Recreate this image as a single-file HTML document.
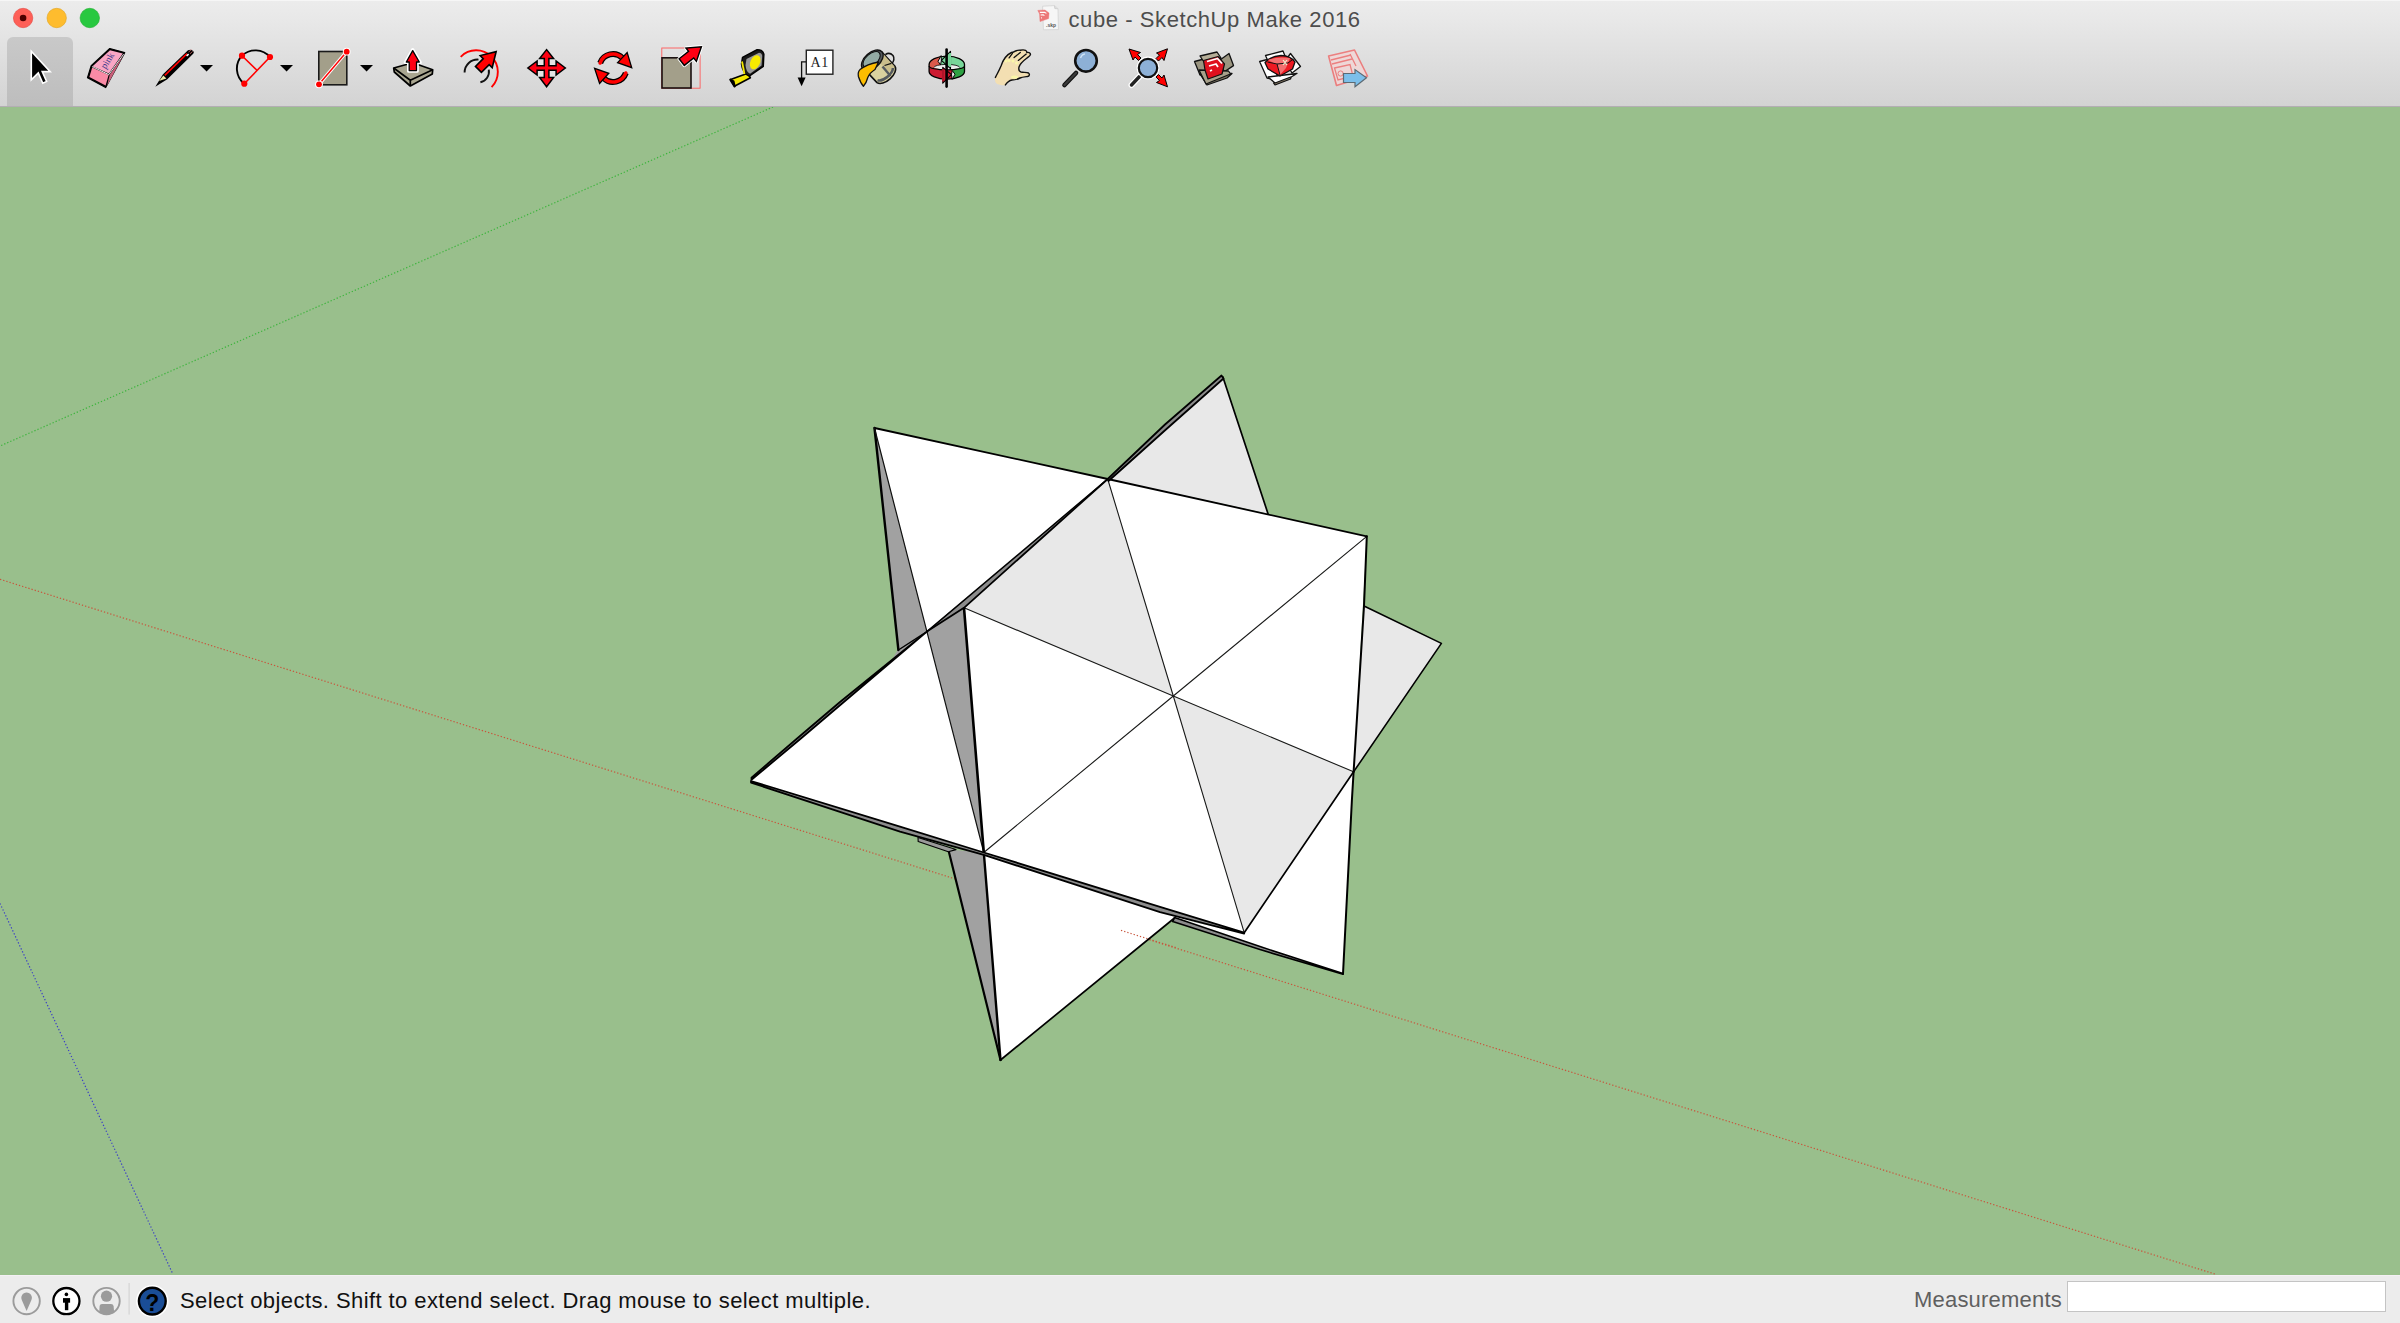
<!DOCTYPE html>
<html><head><meta charset="utf-8">
<style>
html,body{margin:0;padding:0;width:2400px;height:1323px;overflow:hidden;font-family:"Liberation Sans",sans-serif;}
#top{position:absolute;left:0;top:0;width:2400px;height:106px;background:linear-gradient(#ececec 0px,#e8e8e8 20px,#d3d3d3 106px);}
#topline{position:absolute;left:0;top:0;width:2400px;height:1px;background:#f6f6f6;}
#tbb{position:absolute;left:0;top:106px;width:2400px;height:1px;background:#b3aeb3;}
#view{position:absolute;left:0;top:107px;width:2400px;height:1168px;background:#99bf8c;overflow:hidden;}
#status{position:absolute;left:0;top:1275px;width:2400px;height:48px;background:#ececec;}
.title{position:absolute;left:1068.5px;top:6.5px;font-size:22px;color:#4d4d4d;white-space:nowrap;letter-spacing:0.58px;}
.stxt{position:absolute;left:180px;top:1288px;font-size:22px;color:#111;white-space:nowrap;letter-spacing:0.42px;}
.meas{position:absolute;left:1914px;top:1287px;font-size:22px;color:#5f5f5f;white-space:nowrap;letter-spacing:0.2px;}
.mbox{position:absolute;left:2067px;top:1281px;width:317px;height:29px;background:#fff;border:1px solid #c4c4c4;}
.sel{position:absolute;left:7px;top:37px;width:66px;height:69px;background:linear-gradient(#c9c9c9,#bdbdbd);border-radius:6px 6px 0 0;}
svg{position:absolute;overflow:visible;}
</style></head><body>
<div id="top"></div><div id="topline"></div><div id="tbb"></div>
<div class="sel"></div>
<div class="title">cube - SketchUp Make 2016</div>
<div id="view"></div>
<div id="status"></div><div style="position:absolute;left:0;top:1275px;width:2400px;height:1px;background:#f4f0f4"></div>
<div class="stxt">Select objects. Shift to extend select. Drag mouse to select multiple.</div>
<div class="meas">Measurements</div>
<div class="mbox"></div>
<!--TRAFFIC--><!--DOC--><svg style="left:1030px;top:0" width="40" height="40" viewBox="1030 0 40 40">
<path d="M1042.6,6.2 L1054.8,5.6 L1058,8.8 L1058.4,29.6 L1043.4,29.8 Z" fill="#f6f6f6" stroke="#cfcfcf" stroke-width="0.7"/>
<path d="M1054.4,5.8 L1054.8,8.6 L1057.8,8.8" fill="#ddd" stroke="#bbb" stroke-width="0.5"/>
<text x="1046" y="26.6" font-family="Liberation Sans" font-weight="bold" font-size="5" fill="#555">.skp</text>
<path d="M1037.8,10.4 L1045,10 L1049,13 L1048.6,18.6 L1040,21.6 L1039.6,14 Z" fill="#ec7878" stroke="#e66" stroke-width="0.4"/>
<path d="M1039.8,12.4 L1044.6,12.2 L1046.4,13.4 M1040.6,15 L1043.2,14.8 L1044.4,15.6 M1041,18 L1042,17.8" fill="none" stroke="#fff" stroke-width="1.1"/>
</svg>
<!--/DOC-->
<!--ICONS--><svg style="left:0;top:0" width="1400" height="107" viewBox="0 0 1400 107">
<!-- select arrow -->
<path d="M31.3,51.2 L31.3,79.8 L38.3,72.9 L42.8,83.2 L46.6,81.4 L42.2,71.6 L50.2,71.6 Z" fill="#000" stroke="#fff" stroke-width="1.6" stroke-linejoin="miter"/>
<!-- eraser -->
<g stroke-linejoin="round">
<path d="M91.2,65.8 L109.8,48.5 L124.7,52.6 L105.7,87.5 L87.5,77.6 Z" fill="#000" stroke="#000" stroke-width="1.2"/>
<path d="M92.6,66.2 L110,50.2 L122.8,53.6 L108.8,73.6 Z" fill="#f9a6c4"/>
<path d="M92.2,67.4 L108.6,75.0 L105.6,85.6 L89.4,77.0 Z" fill="#f98aa5"/>
<path d="M109.8,74.6 L123.6,55 L107,86 Z" fill="#c9607a"/>
<path d="M92.2,66.6 L108.8,74.6 L123.6,54.2" fill="none" stroke="#fff" stroke-width="0.9"/>
<text x="0" y="0" font-family="Liberation Serif" font-size="9.5" fill="#3a3a8a" transform="translate(105.5,69.5) rotate(-58)">pink</text>
</g>
<!-- pencil -->
<g stroke-linejoin="round">
<path d="M155.3,86.7 L163,74.3 L188,50.3 Q191.5,48.8 193.6,51.6 Q194.4,53.2 192.7,54.3 L167.3,79.3 Z" fill="#000"/>
<path d="M164.8,75.4 L187,53.6" stroke="#ff0000" stroke-width="1.6"/>
<path d="M159,81 L163.4,75.4 L166.4,78.6 Z" fill="#ece8a6"/>
<path d="M186.6,56 L188.6,54.2" stroke="#fff" stroke-width="1.6"/>
<path d="M188.6,52 L191.4,49.6 M190,53.8 L192.6,51.4" stroke="#d46a6a" stroke-width="0.8"/>
</g>
<path d="M200,65 L213,65 L206.6,71.4 Z" fill="#000"/>
<!-- arc -->
<path d="M244.3,83.7 A19,19 0 0 1 242,55.7 M242,55.7 A19.5,19.5 0 0 1 270,57" fill="none" stroke="#000" stroke-width="1.9"/>
<path d="M244.3,83.7 L270,57 M242,55.7 L256.7,70" stroke="#ff0000" stroke-width="1.6" fill="none"/>
<circle cx="242" cy="55.7" r="3.1" fill="#ff0000"/>
<circle cx="270" cy="57" r="3.1" fill="#ff0000"/>
<circle cx="244.3" cy="83.7" r="3.1" fill="#ff0000"/>
<path d="M280,65 L293,65 L286.6,71.4 Z" fill="#000"/>
<!-- rectangle -->
<rect x="318.8" y="51.5" width="28" height="33.3" fill="#a39f8a" stroke="#1a1a1a" stroke-width="1.6"/>
<path d="M319,84.3 L346.7,51.7" stroke="#fff" stroke-width="3.4"/>
<path d="M319,84.3 L346.7,51.7" stroke="#ff0000" stroke-width="1.4"/>
<circle cx="346.7" cy="51.7" r="3.9" fill="#fff"/><circle cx="346.7" cy="51.7" r="2.9" fill="#ff0000"/>
<circle cx="319" cy="84.3" r="3.9" fill="#fff"/><circle cx="319" cy="84.3" r="2.9" fill="#ff0000"/>
<path d="M360,65 L373,65 L366.6,71.4 Z" fill="#000"/>
<!-- push pull -->
<g stroke="#000" stroke-width="1.7" stroke-linejoin="round">
<path d="M393.7,68 L412.7,62.7 L432.7,69.7 L432.3,74 L410.3,86 L394.3,72 Z" fill="#a9a690"/>
<path d="M393.7,68 L410.3,80.3 L432.7,69.7 M410.3,80.3 L410.3,86" fill="none"/>
<path d="M412.7,49.6 L420.3,62.5 L417.2,62.5 L417.2,71.2 L408.6,71.2 L408.6,62.5 L405.3,62.5 Z" fill="#fff" stroke="#fff" stroke-width="3.2"/><path d="M412.7,50.6 L419.3,62 L416.5,62 L416.5,70.6 L409.2,70.6 L409.2,62 L406.3,62 Z" fill="#ff0013" stroke="#000" stroke-width="1.3"/>
</g>
</svg>
<!--/ICONS-->
<!--SCENE--><svg style="left:0;top:0" width="2400" height="1275" viewBox="0 0 2400 1275"><defs><clipPath id="vc"><rect x="0" y="107" width="2400" height="1168"/></clipPath></defs><g clip-path="url(#vc)">
<line x1="773" y1="107" x2="0" y2="446" stroke="#3db43d" stroke-width="1.2" stroke-dasharray="1.3,2.0"/>
<line x1="0" y1="579.3" x2="2216" y2="1274.4" stroke="#c8553c" stroke-width="1.2" stroke-dasharray="1.3,2.0"/>
<line x1="0" y1="903.4" x2="173" y2="1274.3" stroke="#3b3fc6" stroke-width="1.2" stroke-dasharray="1.3,2.0"/>
<polygon points="1222.8,376.8 1268.0,513.7 1107.7,479.0" fill="#e8e8e8"/>
<polygon points="1364.0,606.0 1441.4,643.4 1353.6,771.8" fill="#e8e8e8"/>
<polygon points="1353.6,771.8 1351.9,800.0 1343.0,974.0 1174.5,918.0 1244.2,932.7" fill="#ffffff"/>
<polygon points="983.8,852.5 1000.5,1060.0 1174.5,918.0 1244.2,932.7" fill="#ffffff"/>
<polygon points="948.3,849.5 1000.5,1060.0 983.8,852.5" fill="#a1a1a1"/>
<polygon points="1173.3,696.0 964.0,607.8 1107.7,479.0" fill="#e8e8e8"/>
<polygon points="1173.3,696.0 1107.7,479.0 1366.8,536.3" fill="#ffffff"/>
<polygon points="1173.3,696.0 1366.8,536.3 1353.6,771.8" fill="#ffffff"/>
<polygon points="1173.3,696.0 1353.6,771.8 1244.2,932.7" fill="#e8e8e8"/>
<polygon points="1173.3,696.0 1244.2,932.7 983.8,852.5" fill="#ffffff"/>
<polygon points="1173.3,696.0 983.8,852.5 964.0,607.8" fill="#ffffff"/>
<polygon points="874.5,428.0 1107.7,479.0 1104.0,482.0 926.9,631.6" fill="#ffffff"/>
<polygon points="874.5,428.0 926.9,631.6 899.0,652.0" fill="#a1a1a1"/>
<polygon points="897.0,651.0 926.9,631.6 892.0,660.0" fill="#a1a1a1"/>
<polygon points="926.9,631.6 964.0,607.8 983.8,852.5" fill="#a1a1a1"/>
<polygon points="750.7,781.5 752.0,778.0 926.9,631.6 983.8,852.5" fill="#ffffff"/>
<line x1="1121" y1="930.4" x2="1176" y2="947.6" stroke="#c8553c" stroke-width="1.2" stroke-dasharray="1.3,2.0"/>
<polyline points="1173.3,696.0 1107.7,479.0" fill="none" stroke="#1a1a1a" stroke-width="1.1" stroke-linejoin="round" stroke-linecap="round"/>
<polyline points="1173.3,696.0 1366.8,536.3" fill="none" stroke="#1a1a1a" stroke-width="1.1" stroke-linejoin="round" stroke-linecap="round"/>
<polyline points="1173.3,696.0 1353.6,771.8" fill="none" stroke="#1a1a1a" stroke-width="1.1" stroke-linejoin="round" stroke-linecap="round"/>
<polyline points="1173.3,696.0 1244.2,932.7" fill="none" stroke="#1a1a1a" stroke-width="1.1" stroke-linejoin="round" stroke-linecap="round"/>
<polyline points="1173.3,696.0 983.8,852.5" fill="none" stroke="#1a1a1a" stroke-width="1.1" stroke-linejoin="round" stroke-linecap="round"/>
<polyline points="1173.3,696.0 964.0,607.8" fill="none" stroke="#1a1a1a" stroke-width="1.1" stroke-linejoin="round" stroke-linecap="round"/>
<polyline points="874.5,428.0 1107.7,479.0 1366.8,536.3" fill="none" stroke="#000" stroke-width="1.8" stroke-linejoin="round" stroke-linecap="round"/>
<polyline points="1222.8,376.8 1268.0,513.7" fill="none" stroke="#000" stroke-width="1.7" stroke-linejoin="round" stroke-linecap="round"/>
<polyline points="1366.8,536.3 1364.0,606.0 1353.6,771.8" fill="none" stroke="#000" stroke-width="2.0" stroke-linejoin="round" stroke-linecap="round"/>
<polyline points="1364.0,606.0 1441.4,643.4 1353.6,771.8" fill="none" stroke="#000" stroke-width="1.6" stroke-linejoin="round" stroke-linecap="round"/>
<polyline points="1353.6,771.8 1351.9,800.0 1343.0,974.0" fill="none" stroke="#000" stroke-width="2.0" stroke-linejoin="round" stroke-linecap="round"/>
<polyline points="874.5,428.0 898.4,650.0" fill="none" stroke="#000" stroke-width="2.4" stroke-linejoin="round" stroke-linecap="round"/>
<polyline points="874.5,428.0 983.8,852.5" fill="none" stroke="#111" stroke-width="1.2" stroke-linejoin="round" stroke-linecap="round"/>
<polyline points="964.0,607.8 983.8,852.5" fill="none" stroke="#000" stroke-width="2.6" stroke-linejoin="round" stroke-linecap="round"/>
<polyline points="948.3,849.5 1000.5,1060.0" fill="none" stroke="#000" stroke-width="2.2" stroke-linejoin="round" stroke-linecap="round"/>
<polyline points="983.8,852.5 1000.5,1060.0" fill="none" stroke="#000" stroke-width="2.4" stroke-linejoin="round" stroke-linecap="round"/>
<polyline points="1000.5,1060.0 1174.5,918.0" fill="none" stroke="#000" stroke-width="1.7" stroke-linejoin="round" stroke-linecap="round"/>
<polyline points="1244.2,932.7 1353.6,771.8" fill="none" stroke="#000" stroke-width="1.7" stroke-linejoin="round" stroke-linecap="round"/>
<polyline points="898.4,650.0 926.9,631.6" fill="none" stroke="#000" stroke-width="1.4" stroke-linejoin="round" stroke-linecap="round"/>
<polygon points="926.9,631.6 945.0,615.7 985.0,582.7 1107.7,479.0 985.0,589.2 964.0,607.8" fill="#8c8c8c"/>
<polyline points="926.9,631.6 1107.7,479.0" fill="none" stroke="#000" stroke-width="1.5" stroke-linejoin="round" stroke-linecap="round"/>
<polyline points="926.9,631.6 964.0,607.8 1107.7,479.0" fill="none" stroke="#000" stroke-width="1.8" stroke-linejoin="round" stroke-linecap="round"/>
<polygon points="751.5,777.6 800.0,736.0 840.0,702.0 926.9,631.6 926.9,631.6 840.0,705.2 800.0,739.2 751.5,779.8" fill="#8c8c8c" stroke="#000" stroke-width="1.8" stroke-linejoin="round"/>
<polygon points="1107.7,479.0 1165.0,424.5 1221.5,375.5 1223.5,378.5 1166.5,429.0 1108.5,481.0" fill="#8c8c8c" stroke="#000" stroke-width="1.8" stroke-linejoin="round"/>
<polygon points="751.0,781.0 900.0,826.6 983.8,852.5 1160.0,906.9 1244.2,932.7 1244.2,933.6 1160.0,912.2 983.8,854.8 900.0,831.6 751.0,782.6" fill="#8c8c8c" stroke="#000" stroke-width="1.8" stroke-linejoin="round"/>
<polygon points="1174.5,917.6 1260.0,946.6 1343.0,973.6 1343.0,974.2 1260.0,949.6 1172.7,921.6" fill="#8c8c8c" stroke="#000" stroke-width="1.6" stroke-linejoin="round"/>
<polygon points="918,837.4 956,849.6 948.3,851.8 918.2,841.6" fill="#9a9a9a" stroke="#000" stroke-width="1.1" stroke-linejoin="round"/>
</g></svg><!--/SCENE-->
<!--ICONS2--><svg style="left:0;top:0" width="1400" height="107" viewBox="0 0 1400 107">
<!-- offset -->
<path d="M460.7,56.8 A20.3,20.3 0 1 1 491.6,87.2" fill="none" stroke="#ff0000" stroke-width="1.9"/>
<path d="M464.6,72.5 A13,13 0 0 1 478.5,59.6" fill="none" stroke="#111" stroke-width="1.9"/>
<path d="M480.4,82.3 A11,11 0 0 0 488.8,69.7" fill="none" stroke="#111" stroke-width="1.9"/>
<path d="M0,0 L-14,-8.5 L-14,-4.2 L-25,-4.2 L-25,4.2 L-14,4.2 L-14,8.5 Z" transform="translate(496.1,51.7) rotate(135) scale(-1,1)" fill="#ff0000" stroke="#000" stroke-width="1.6" stroke-linejoin="miter"/>
<!-- move -->
<g transform="translate(546.6,68)">
<rect x="-9.5" y="-9.5" width="19" height="19" fill="#e4e4e4"/>
<path d="M0,-18.4 L7,-9.5 L2.3,-9.5 L2.3,-2.3 L9.5,-2.3 L9.5,-7 L18.7,0 L9.5,7 L9.5,2.3 L2.3,2.3 L2.3,9.5 L7,9.5 L0,18.7 L-7,9.5 L-2.3,9.5 L-2.3,2.3 L-9.5,2.3 L-9.5,7 L-18.7,0 L-9.5,-7 L-9.5,-2.3 L-2.3,-2.3 L-2.3,-9.5 L-7,-9.5 Z" fill="#ff0013" stroke="#000" stroke-width="1.5" stroke-linejoin="miter"/>
</g>
<!-- rotate -->
<g stroke-linejoin="miter">
<path d="M600.2,63 A13.5,13.5 0 0 1 622.5,58" fill="none" stroke="#000" stroke-width="6"/>
<path d="M600.2,63 A13.5,13.5 0 0 1 622.5,58" fill="none" stroke="#ff0000" stroke-width="3.6" stroke-linecap="round"/>
<path d="M627.2,52.6 L631.7,67.6 L617.6,62.6 Z" fill="#ff0000" stroke="#000" stroke-width="1.3"/>
<path d="M625.8,73 A13.5,13.5 0 0 1 603.5,78" fill="none" stroke="#000" stroke-width="6"/>
<path d="M625.8,73 A13.5,13.5 0 0 1 603.5,78" fill="none" stroke="#ff0000" stroke-width="3.6" stroke-linecap="round"/>
<path d="M594.6,68.4 L599.6,83.4 L608.8,73.3 Z" fill="#ff0000" stroke="#000" stroke-width="1.3"/>
</g>
<!-- scale -->
<rect x="661.8" y="48" width="38.3" height="40.2" fill="none" stroke="#ff5a5a" stroke-width="0.9"/>
<rect x="662" y="57.8" width="29" height="30.2" fill="#a39f8a" stroke="#1a1010" stroke-width="1.6"/>
<path d="M0,0 L-13,-8.5 L-13,-4.2 L-25,-4.2 L-25,4.2 L-13,4.2 L-13,8.5 Z" transform="translate(701.4,46.7) rotate(142)  scale(-1,1)" fill="#fff" stroke="#fff" stroke-width="3.4" stroke-linejoin="round"/>
<path d="M0,0 L-13,-8.5 L-13,-4.2 L-25,-4.2 L-25,4.2 L-13,4.2 L-13,8.5 Z" transform="translate(701.4,46.7) rotate(142)  scale(-1,1)" fill="#ff0013" stroke="#000" stroke-width="1.4"/>
<!-- tape -->
<g stroke-linejoin="round">
<path d="M730.6,79.5 L747.8,73.2 L750.4,77.8 L734.4,86.2 Z" fill="#f4e800" stroke="#000" stroke-width="1.6"/>
<path d="M730.4,79.6 L734.6,86.4 L733.5,81.5 Z" fill="#000" stroke="#000" stroke-width="2.2"/>
<path d="M742.5,57.4 L757.1,49.6 Q762.8,49.5 763.9,54.2 L763.3,66.4 L749.2,76.2 Q742.4,73 741.4,64 Z" fill="#1a1a1a" stroke="#000" stroke-width="1.4"/>
<path d="M746.5,59 L759,52.8 Q762,53.2 762.2,56 L761.5,65.5 L750,73.8 Q746,72 745.5,65 Z" fill="#9a9a9a"/>
<ellipse cx="755.2" cy="62.2" rx="4.8" ry="7.4" transform="rotate(25 755.2 62.2)" fill="#f8ec00"/>
<path d="M742,61.5 L744.5,74" stroke="#f4e800" stroke-width="1.8"/>
</g>
<!-- text -->
<rect x="806.3" y="50.2" width="26.6" height="24" fill="#fff" stroke="#222" stroke-width="1.4"/>
<text x="810.6" y="66.6" font-family="Liberation Serif" font-size="14" fill="#222" letter-spacing="0.6">A1</text>
<path d="M806,61.9 L801.6,61.9 L801.6,79" fill="none" stroke="#111" stroke-width="1.3"/>
<path d="M797.6,77.5 L805.6,77.5 L801.6,86.2 Z" fill="#000"/>
<!-- paint bucket -->
<g transform="translate(853,45)" stroke-linejoin="round">
<path d="M32.3,9.6 Q36.5,6.8 40,10.5 Q42.5,14.5 38.2,19.8" fill="none" stroke="#111" stroke-width="1.5"/>
<path d="M28.6,6.9 L42,21.4 A12.2,6.8 -41.3 0 1 24,37.6 L10.4,23.1 Z" fill="#d9d19f" stroke="#111" stroke-width="1.6"/>
<path d="M29,7.5 L41.5,21.5 L36,27 L26,17 Z" fill="#c9bd8b"/>
<path d="M40,23 A10.8,5.8 -41.3 0 1 24.5,35.2" fill="none" stroke="#555a5f" stroke-width="2.6"/>
<path d="M29.5,21.5 L37.5,31" stroke="#555a5f" stroke-width="2.4"/>
<path d="M31.5,20.5 L38.4,18.4" stroke="#111" stroke-width="1.2"/>
<ellipse cx="19.3" cy="15.2" rx="12.8" ry="7.6" transform="rotate(-41.3 19.3 15.2)" fill="#555a5f" stroke="#111" stroke-width="1.3"/>
<ellipse cx="18.6" cy="14.6" rx="10.3" ry="5.7" transform="rotate(-41.3 18.6 14.6)" fill="#93aba4" stroke="#111" stroke-width="1"/>
<path d="M25.6,17 Q14,19 7,24.6 Q4.5,27 5.4,31.5 Q7.5,38 10.4,41.2 Q13.4,38 14.8,32.5 Q16.5,28 22,24.5 Z" fill="#fdbd00" stroke="#111" stroke-width="1.3"/>
</g>
<!-- orbit -->
<defs><clipPath id="obR1"><rect x="18.1" y="-5" width="30" height="60"/></clipPath><clipPath id="obR2"><rect x="29.2" y="-5" width="30" height="60"/></clipPath></defs>
<g transform="translate(923,45)" stroke-linejoin="round">
<path id="obBack" d="M6.1,19.5 A17.7,8.4 0 0 1 41.5,19.5 L41.5,20.9 A17.7,4 0 0 1 6.1,20.9 Z" fill="#dc5a4c"/>
<path d="M6.1,19.5 A17.7,8.4 0 0 1 41.5,19.5 L41.5,20.9 A17.7,4 0 0 1 6.1,20.9 Z" fill="#78d79a" clip-path="url(#obR1)" transform=""/>
<path d="M6.1,20.9 A17.7,4 0 0 0 41.5,20.9 L41.5,26.5 A17.7,7.6 0 0 1 6.1,26.5 Z" fill="#cc1a31"/>
<path d="M6.1,20.9 A17.7,4 0 0 0 41.5,20.9 L41.5,26.5 A17.7,7.6 0 0 1 6.1,26.5 Z" fill="#2ea244" clip-path="url(#obR2)"/>
<path d="M10.8,22.6 A13,3.2 0 0 1 36.8,22.6 A17.7,4 0 0 1 23.8,24.9 A17.7,4 0 0 1 10.8,22.6 Z" fill="#ededed"/>
<path d="M6.1,19.5 A17.7,8.4 0 0 1 41.5,19.5 L41.5,26.5 A17.7,7.6 0 0 1 6.1,26.5 Z" fill="none" stroke="#000" stroke-width="1.3"/>
<path d="M6.1,20.9 A17.7,4 0 0 0 41.5,20.9" fill="none" stroke="#000" stroke-width="1.1"/>
<path d="M10.8,22.6 A13,3.2 0 0 1 36.8,22.6" fill="none" stroke="#000" stroke-width="0.8"/>
<path d="M18.1,10.6 L15,16.3 L17.6,19.8 L18.4,15.3 Z" fill="#ededed" stroke="#000" stroke-width="1"/>
<path d="M18.4,15.3 L27.5,6.4 L27.5,23.6 Z" fill="#78d79a" stroke="#000" stroke-width="1.1"/>
<path d="M29.2,25.5 L32,29.2 L29.2,34.4 L28.5,29.6 Z" fill="#ededed" stroke="#000" stroke-width="1"/>
<path d="M28.5,29.6 L19.8,22.3 L19.8,38.2 Z" fill="#cc1a31" stroke="#000" stroke-width="1.1"/>
<path d="M19.9,24 L19.9,36.5" stroke="#cc1a31" stroke-width="1.4"/>
<path d="M27.4,8 L27.4,22" stroke="#78d79a" stroke-width="1.4"/>
<rect x="22.3" y="3.3" width="2.6" height="39.6" rx="1.3" fill="#000"/>
</g>
<!-- pan hand -->
<g transform="translate(985,40)" stroke-linejoin="round" stroke-linecap="round">
<path d="M10.4,37.4 C12,34 14,31 16,26 C18,20 21,15 26.5,12.5 L27.8,12.3 C30,11 33,10 35,10.2 C37,9.8 39,9.6 40.5,10.3 C41.5,11 42,11.5 41.8,12.5 C43,12 45.5,12.8 45.5,14.2 C45.5,15.5 44,16.5 42,18 C38,21 35,23.5 34,27 C33.5,29.5 34,31.5 36,32 C38.5,32.5 42,32.3 43.5,33 C45,34 44.5,36.3 42.5,36.5 C40,36.8 37,37 35,38 C32,39.5 30,40 27,40 C24,40.5 22,42.5 20.4,44.9 C17,45.5 13,45 11,43 C9.8,41.5 9.8,39 10.4,37.4 Z" fill="#f3dfb2"/>
<path d="M10.4,37.4 C12,34 14,31 16,26 C18,20 21,15 26.5,12.5 L27.8,12.3 C30,11 33,10 35,10.2 C37,9.8 39,9.6 40.5,10.3 C41.5,11 42,11.5 41.8,12.5 C43,12 45.5,12.8 45.5,14.2 C45.5,15.5 44,16.5 42,18 C38,21 35,23.5 34,27 C33.5,29.5 34,31.5 36,32 C38.5,32.5 42,32.3 43.5,33 C45,34 44.5,36.3 42.5,36.5 C40,36.8 37,37 35,38 C32,39.5 30,40 27,40 C24,40.5 22,42.5 20.4,44.9" fill="none" stroke="#111" stroke-width="1.4"/>
<path d="M24.1,17.9 L27.4,13.3 M29.1,17.5 L35.3,12.5 M33.3,20.4 L41.2,14.1" fill="none" stroke="#111" stroke-width="1.3"/>
<circle cx="21" cy="21" r="1.5" fill="#fbf7a8"/><circle cx="24" cy="20.5" r="1.5" fill="#fbf7a8"/><circle cx="28" cy="21" r="1.5" fill="#fbf7a8"/><circle cx="31.5" cy="23" r="1.5" fill="#fbf7a8"/>
<ellipse cx="29.5" cy="37" rx="3.5" ry="1.6" fill="#fbf7a8"/>
</g>
<!-- zoom -->
<g>
<line x1="1064.5" y1="85" x2="1076" y2="73" stroke="#111" stroke-width="4.6" stroke-linecap="round"/>
<line x1="1064.5" y1="85" x2="1076" y2="73" stroke="#3a3a3a" stroke-width="2.4" stroke-linecap="round"/>
<circle cx="1086" cy="60.8" r="10.8" fill="#8db0d6" stroke="#111" stroke-width="2.6"/>
<path d="M1080.5,58 A6,6 0 0 1 1085,53.8" fill="none" stroke="#cfe3f5" stroke-width="1.3"/>
</g>
<!-- zoom extents -->
<g>
<line x1="1131.5" y1="85" x2="1139.5" y2="76.5" stroke="#fff" stroke-width="6" stroke-linecap="round"/>
<line x1="1131.5" y1="85" x2="1139.5" y2="76.5" stroke="#222" stroke-width="3.4" stroke-linecap="round"/>
<circle cx="1148" cy="68" r="9.2" fill="#8db0d6" stroke="#fff" stroke-width="4.4"/>
<circle cx="1148" cy="68" r="9.2" fill="#8db0d6" stroke="#111" stroke-width="2.2"/>
<path d="M1129,49 L1140.5,52.5 L1137.5,54.5 L1141,58 L1138.5,60.5 L1135,57 L1133,60 Z" fill="#ff0000" stroke="#000" stroke-width="1"/>
<path d="M1167.5,48.8 L1164,60.5 L1162,57.5 L1158.5,61 L1156,58.5 L1159.5,55 L1156.5,53 Z" fill="#ff0000" stroke="#000" stroke-width="1"/>
<path d="M1167.5,86.8 L1164,75 L1162,78 L1158.5,74.5 L1156,77 L1159.5,80.5 L1156.5,82.5 Z" fill="#ff0000" stroke="#000" stroke-width="1"/>
</g>
<!-- 3d warehouse -->
<g stroke="#111" stroke-linejoin="round">
<path d="M1194.5,61.5 L1204,59 L1210,73.5 L1200,75 Z" fill="#9b9580" stroke-width="1.3"/>
<path d="M1229,53.5 L1233.5,65.6 L1224,72 L1220,60 Z" fill="#9b9580" stroke-width="1.3"/>
<path d="M1200,74 L1232,73.5 L1227,78 L1207,85 Z" fill="#7d7662" stroke-width="1.3"/>
<path d="M1199,70 L1228.5,71 L1230.5,74 L1206,84 Z" fill="#a7a08a" stroke-width="1.3"/>
<path d="M1200,56 L1217,52 L1221,58 L1204,62 Z" fill="#b5ae98" stroke-width="1.3"/>
<path d="M1203.5,60.5 L1218,56.5 L1224.5,64 L1222,74 L1208,79 L1205,70 Z" fill="#e0101e" stroke-width="1.2"/>
<path d="M1207,61.5 L1217.5,58.5 L1222,63.5 M1209,66 L1216,64 L1218,67 M1210,71 L1212,70" fill="none" stroke="#fff" stroke-width="1.8"/>
</g>
<!-- extension warehouse -->
<g stroke="#111" stroke-linejoin="round">
<path d="M1259.6,61.5 L1271,58.5 L1279,80.5 L1267,78 Z" fill="#fff" stroke-width="1.3"/>
<path d="M1290.5,53.5 L1300.5,66.5 L1292,73 L1285,61 Z" fill="#fff" stroke-width="1.3"/>
<path d="M1273.5,83 L1291.5,76 L1290.5,79 L1275,85 Z" fill="#8a7c66" stroke-width="1.2"/>
<path d="M1268,77 L1297,73.5 L1292,76.5 L1275,83 Z" fill="#fff" stroke-width="1.3"/>
<path d="M1265.5,55.5 L1283,51 L1285,56 L1268,61 Z" fill="#fff" stroke-width="1.3"/>
<path d="M1265,62.5 Q1270,56.5 1281,55.5 Q1291,56 1295,62 L1292.5,69 L1280,76 L1268,69 Z" fill="#ee1a22" stroke-width="1.3"/>
<path d="M1268,60 Q1276,56.5 1290,58 L1286,68 L1280,75 L1277,65 Z" fill="#f47070" stroke="none"/>
<path d="M1267.5,62 L1277,64 L1280,75 M1277,64 L1288,63 L1292,60" fill="none" stroke-width="1"/>
<path d="M1283,60 L1287,65 M1287,60 L1283,65" stroke="#f5f0d0" stroke-width="1.2"/>
</g>
<!-- layout -->
<g opacity="0.75">
<path d="M1328.6,56 L1354.5,50 L1367.5,76 L1336.5,85.5 Z" fill="#f4d6d6" stroke="#f06060" stroke-width="1.6" stroke-linejoin="round"/>
<path d="M1331,60 L1351,55 M1332,64 L1352,59 M1334.5,68 L1350,64.5 L1353,76 L1338,80 Z M1350,54 L1356,66" fill="none" stroke="#f06060" stroke-width="1.3"/>
<circle cx="1340.6" cy="73.5" r="2.6" fill="none" stroke="#f06060" stroke-width="1"/>
</g>
<path d="M1343.5,73.5 L1355,73.5 L1355,69.6 L1366.5,77.8 L1355,86.8 L1355,82.5 L1343.5,82.5 Z" fill="#7cbfea" stroke="#5d6a73" stroke-width="1.2" stroke-linejoin="miter"/>
</svg>
<!--/ICONS2--><!--STATUSICONS--><svg style="left:0;top:0" width="200" height="1323" viewBox="0 0 200 1323">
<circle cx="23.1" cy="18" r="9.7" fill="#fe5f57" stroke="#e2463f" stroke-width="0.6"/>
<circle cx="23.1" cy="18" r="3.3" fill="#4d0000"/>
<circle cx="56.7" cy="18" r="9.7" fill="#febc2e" stroke="#e1a116" stroke-width="0.6"/>
<circle cx="89.8" cy="18" r="9.7" fill="#28c840" stroke="#1dad2b" stroke-width="0.6"/>
<circle cx="26.6" cy="1301.1" r="13.2" fill="none" stroke="#9b9b9b" stroke-width="1.9"/>
<path d="M26.6,1310.9 L22,1300.5 A5.3,5.3 0 1 1 31.2,1300.5 Z" fill="#9b9b9b"/>
<circle cx="66.4" cy="1301.1" r="13.3" fill="#fff" stroke="#fff" stroke-width="3"/>
<circle cx="66.4" cy="1301.1" r="13.1" fill="none" stroke="#000" stroke-width="2.3"/>
<circle cx="66.4" cy="1294.4" r="1.8" fill="#000"/>
<rect x="63" y="1298.1" width="7.1" height="4.6" fill="#000"/>
<rect x="64.9" y="1302" width="3.4" height="8.2" fill="#000"/>
<circle cx="106.5" cy="1301.1" r="13.2" fill="none" stroke="#9b9b9b" stroke-width="1.9"/>
<circle cx="106.5" cy="1296.2" r="5.6" fill="#9b9b9b"/>
<path d="M99.2,1313 L99.6,1306 Q100,1304.1 102,1304.1 L111,1304.1 Q113.2,1304.1 113.6,1306 L114.2,1313 Q106.5,1315.5 99.2,1313 Z" fill="#9b9b9b"/>
<rect x="128.6" y="1283" width="1" height="31.6" fill="#cfcfcf"/>
<circle cx="152.3" cy="1301.1" r="16.2" fill="#fff"/>
<circle cx="152.3" cy="1301.1" r="13.4" fill="#1a4d96" stroke="#000" stroke-width="2.4"/>
<text x="152.3" y="1310.6" text-anchor="middle" font-family="Liberation Sans" font-weight="bold" font-size="23" fill="#000">?</text>
</svg>
<!--/STATUSICONS-->
</body></html>
